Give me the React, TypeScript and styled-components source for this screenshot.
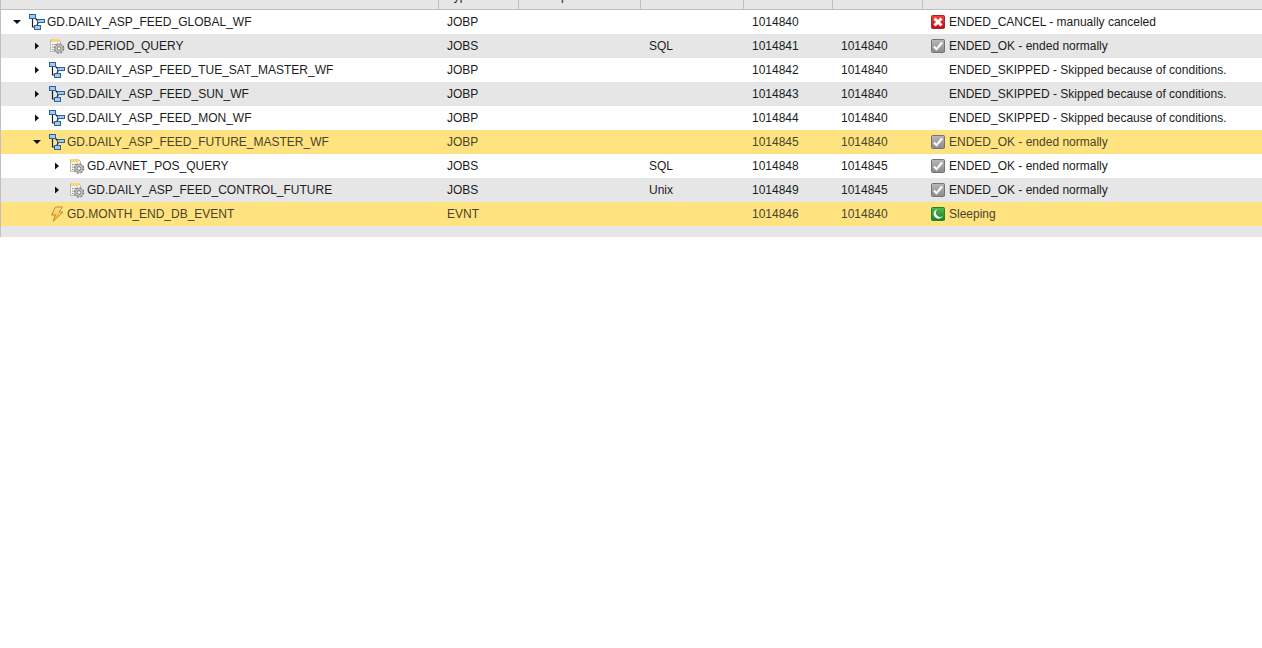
import React from "react";
import styled, { createGlobalStyle } from "styled-components";

const GlobalStyle = createGlobalStyle`
  body {
    margin: 0;
    background: #ffffff;
    font-family: "Liberation Sans", Arial, Helvetica, sans-serif;
  }
`;

const Panel = styled.main`
  border-left: 1px solid #c0c0c0;
`;

const Table = styled.table`
  width: 100%;
  table-layout: fixed;
  border-collapse: separate;
  border-spacing: 0;
  font-size: 12px;
  line-height: 16px;
  color: #1c1c1c;
`;

const Col = styled.col<{ $width?: number }>`
  width: ${(p) => (p.$width ? `${p.$width}px` : "auto")};
`;

const HeadCell = styled.th`
  padding: 0;
  background: #e6e6e6;
  border-bottom: 1px solid #c0c0c0;
  border-right: 1px solid #c0c0c0;
  font-weight: 400;
  text-align: left;

  &:last-child {
    border-right: 0;
  }
`;

const HeadLabel = styled.div`
  display: flex;
  align-items: flex-end;
  height: 9px;
  padding: 0 8px 5px;
  box-sizing: border-box;
  overflow: hidden;
`;

const Row = styled.tr<{ $active?: boolean }>`
  background: ${(p) => (p.$active ? "#ffe380" : "#ffffff")};
  color: ${(p) => (p.$active ? "#4a432c" : "inherit")};

  &:nth-child(even) {
    background: ${(p) => (p.$active ? "#ffe380" : "#e6e6e6")};
  }
`;

const Cell = styled.td`
  height: 24px;
  padding: 0 8px;
  white-space: nowrap;
  overflow: hidden;
`;

const Footer = styled.div`
  height: 11px;
  background: #e6e6e6;
`;

const TreeNode = styled.div<{ $level: number }>`
  display: flex;
  align-items: center;
  padding-left: ${(p) => p.$level * 20}px;
`;

const Toggle = styled.button`
  display: flex;
  width: 16px;
  height: 16px;
  margin-right: 4px;
  padding: 0;
  border: 0;
  background: none;
  color: #111111;
`;

const Spacer = styled.span`
  width: 20px;
`;

const Name = styled.span`
  margin-left: 2px;
`;

const Status = styled.div`
  display: flex;
  align-items: center;
  gap: 4px;
`;

const StatusSlot = styled.span`
  display: flex;
  width: 14px;
  height: 14px;
`;

type Kind = "JOBP" | "JOBS" | "EVNT";
type State = "cancel" | "ok" | "skipped" | "sleeping";

interface Task {
  name: string;
  level: number;
  kind: Kind;
  open?: boolean;
  platform?: string;
  id: string;
  parent?: string;
  state: State;
  active?: boolean;
}

const labels: Record<State, string> = {
  cancel: "ENDED_CANCEL - manually canceled",
  ok: "ENDED_OK - ended normally",
  skipped: "ENDED_SKIPPED - Skipped because of conditions.",
  sleeping: "Sleeping",
};

const tasks: Task[] = [
  { name: "GD.DAILY_ASP_FEED_GLOBAL_WF", level: 0, kind: "JOBP", open: true, id: "1014840", state: "cancel" },
  { name: "GD.PERIOD_QUERY", level: 1, kind: "JOBS", platform: "SQL", id: "1014841", parent: "1014840", state: "ok" },
  { name: "GD.DAILY_ASP_FEED_TUE_SAT_MASTER_WF", level: 1, kind: "JOBP", id: "1014842", parent: "1014840", state: "skipped" },
  { name: "GD.DAILY_ASP_FEED_SUN_WF", level: 1, kind: "JOBP", id: "1014843", parent: "1014840", state: "skipped" },
  { name: "GD.DAILY_ASP_FEED_MON_WF", level: 1, kind: "JOBP", id: "1014844", parent: "1014840", state: "skipped" },
  { name: "GD.DAILY_ASP_FEED_FUTURE_MASTER_WF", level: 1, kind: "JOBP", open: true, id: "1014845", parent: "1014840", state: "ok", active: true },
  { name: "GD.AVNET_POS_QUERY", level: 2, kind: "JOBS", platform: "SQL", id: "1014848", parent: "1014845", state: "ok" },
  { name: "GD.DAILY_ASP_FEED_CONTROL_FUTURE", level: 2, kind: "JOBS", platform: "Unix", id: "1014849", parent: "1014845", state: "ok" },
  { name: "GD.MONTH_END_DB_EVENT", level: 1, kind: "EVNT", id: "1014846", parent: "1014840", state: "sleeping", active: true },
];

const columns = [
  { title: "", width: 438 },
  { title: "Type", width: 80 },
  { title: "Description", width: 122 },
  { title: "", width: 103 },
  { title: "", width: 89 },
  { title: "", width: 90 },
  { title: "" },
];

const Arrow = ({ open }: { open?: boolean }) => (
  <svg width="16" height="16" viewBox="0 0 16 16" aria-hidden="true">
    <path d={open ? "M4 6h8L8 10z" : "M6 4.500l4 3.500-4 3.500z"} fill="currentColor" />
  </svg>
);

const WorkflowIcon = () => (
  <svg width="16" height="16" viewBox="0 0 16 16" aria-hidden="true">
    <path d="M3.500 4v9H6M6 4l3 3M9.500 8L8 11" fill="none" stroke="#1b1b1b" strokeWidth="1.200" />
    <g fill="#9ccbf6" stroke="#2f6199">
      <rect x=".5" y=".5" width="6" height="4" />
      <rect x="8.500" y="5.500" width="7" height="3" />
      <rect x="5.500" y="11.500" width="6" height="4" />
    </g>
  </svg>
);

const JobIcon = () => (
  <svg width="16" height="16" viewBox="0 0 16 16" aria-hidden="true">
    <path d="M1.500 1.500h8l2 2v10h-10z" fill="#f5f5f2" stroke="#bcbab5" />
    <path d="M2 1h8v3H2z" fill="#f8d672" />
    <path d="M3 6.500h1.500M5.500 6.500h1.500M3 9h1.500M3 11.500h1.500" stroke="#8a8880" />
    <circle cx="10" cy="10.500" r="4.700" fill="#d9d9d9" stroke="#858585" strokeWidth="1.200" strokeDasharray="2.200 1.490" />
    <circle cx="10" cy="10.500" r="3.900" fill="#d0d0d0" stroke="#8c8c8c" strokeWidth=".8" />
    <circle cx="10" cy="10.500" r="1.900" fill="#f6f6f6" stroke="#747474" />
  </svg>
);

const EventIcon = () => (
  <svg width="16" height="16" viewBox="0 0 16 16" aria-hidden="true">
    <defs>
      <linearGradient id="bolt" x1="0" y1="0" x2="0" y2="1">
        <stop offset="0" stopColor="#ffe98c" />
        <stop offset="1" stopColor="#f5a91d" />
      </linearGradient>
    </defs>
    <path
      d="M6.500 1H13.500L10 6h4L4 15.300 6.500 9H2.500z"
      fill="url(#bolt)"
      stroke="#c08c35"
      strokeLinejoin="round"
    />
  </svg>
);

const badgeColors = {
  cancel: ["#f0453f", "#c20d12", "#a02a2a"],
  ok: ["#b8b8b8", "#8c8c8c", "#737373"],
  sleeping: ["#55b556", "#168724", "#2f7a34"],
};

const StatusIcon = ({ state }: { state: "cancel" | "ok" | "sleeping" }) => {
  const [top, bottom, edge] = badgeColors[state];
  return (
    <svg width="14" height="14" viewBox="0 0 14 14" aria-hidden="true">
      <defs>
        <linearGradient id={`badge-${state}`} x1="0" y1="0" x2="0" y2="1">
          <stop offset="0" stopColor={top} />
          <stop offset="1" stopColor={bottom} />
        </linearGradient>
      </defs>
      <rect x=".5" y=".5" width="13" height="13" rx="1" fill={`url(#badge-${state})`} stroke={edge} />
      {state === "cancel" && <path d="M3.500 3.500l7 7M10.500 3.500l-7 7" stroke="#ffffff" strokeWidth="3" />}
      {state === "ok" && (
        <path d="M3 7.500l2.500 2.800L11 3.500" fill="none" stroke="#ffffff" strokeWidth="2" />
      )}
      {state === "sleeping" && (
        <path d="M6.500 2.200A4.800 4.800 0 1 0 11.800 9 4.300 4.300 0 0 1 6.500 2.200z" fill="#ffffff" />
      )}
    </svg>
  );
};

const kindIcons: Record<Kind, React.FC> = {
  JOBP: WorkflowIcon,
  JOBS: JobIcon,
  EVNT: EventIcon,
};

const TaskRow = ({ task }: { task: Task }) => {
  const Icon = kindIcons[task.kind];
  return (
    <Row $active={task.active}>
      <Cell>
        <TreeNode $level={task.level}>
          {task.kind === "EVNT" ? (
            <Spacer />
          ) : (
            <Toggle type="button" aria-label={task.name} aria-expanded={!!task.open}>
              <Arrow open={task.open} />
            </Toggle>
          )}
          <Icon />
          <Name>{task.name}</Name>
        </TreeNode>
      </Cell>
      <Cell>{task.kind}</Cell>
      <Cell />
      <Cell>{task.platform}</Cell>
      <Cell>{task.id}</Cell>
      <Cell>{task.parent}</Cell>
      <Cell>
        <Status>
          <StatusSlot>{task.state !== "skipped" && <StatusIcon state={task.state} />}</StatusSlot>
          <span>{labels[task.state]}</span>
        </Status>
      </Cell>
    </Row>
  );
};

export default function App() {
  return (
    <Panel>
      <GlobalStyle />
      <Table>
        <colgroup>
          {columns.map((c, i) => (
            <Col key={i} $width={c.width} />
          ))}
        </colgroup>
        <thead>
          <tr>
            {columns.map((c, i) => (
              <HeadCell key={i} scope="col">
                <HeadLabel>{c.title}</HeadLabel>
              </HeadCell>
            ))}
          </tr>
        </thead>
        <tbody>
          {tasks.map((t) => (
            <TaskRow key={t.id} task={t} />
          ))}
        </tbody>
      </Table>
      <Footer />
    </Panel>
  );
}
